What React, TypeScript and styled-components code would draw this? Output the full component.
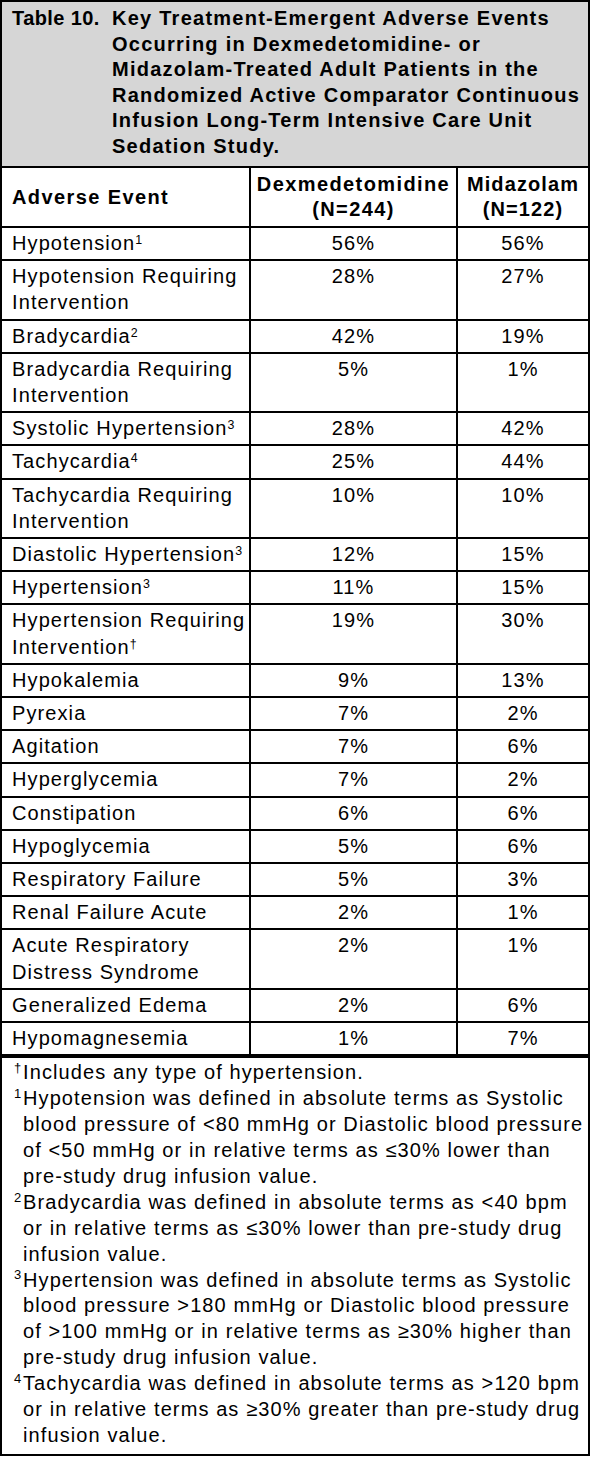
import React from 'react';
import styled, { createGlobalStyle } from 'styled-components';

const GlobalStyle = createGlobalStyle`
  html, body {
    margin: 0;
    padding: 0;
    background: #fff;
  }
  body {
    font-family: "Liberation Sans", Arial, Helvetica, sans-serif;
    color: #000;
  }
`;

type Row = { event: string; mark?: string; dex: string; mid: string };

const rows: Row[] = [
  { event: 'Hypotension', mark: '1', dex: '56%', mid: '56%' },
  { event: 'Hypotension Requiring\nIntervention', dex: '28%', mid: '27%' },
  { event: 'Bradycardia', mark: '2', dex: '42%', mid: '19%' },
  { event: 'Bradycardia Requiring\nIntervention', dex: '5%', mid: '1%' },
  { event: 'Systolic Hypertension', mark: '3', dex: '28%', mid: '42%' },
  { event: 'Tachycardia', mark: '4', dex: '25%', mid: '44%' },
  { event: 'Tachycardia Requiring\nIntervention', dex: '10%', mid: '10%' },
  { event: 'Diastolic Hypertension', mark: '3', dex: '12%', mid: '15%' },
  { event: 'Hypertension', mark: '3', dex: '11%', mid: '15%' },
  { event: 'Hypertension Requiring\nIntervention', mark: '†', dex: '19%', mid: '30%' },
  { event: 'Hypokalemia', dex: '9%', mid: '13%' },
  { event: 'Pyrexia', dex: '7%', mid: '2%' },
  { event: 'Agitation', dex: '7%', mid: '6%' },
  { event: 'Hyperglycemia', dex: '7%', mid: '2%' },
  { event: 'Constipation', dex: '6%', mid: '6%' },
  { event: 'Hypoglycemia', dex: '5%', mid: '6%' },
  { event: 'Respiratory Failure', dex: '5%', mid: '3%' },
  { event: 'Renal Failure Acute', dex: '2%', mid: '1%' },
  { event: 'Acute Respiratory\nDistress Syndrome', dex: '2%', mid: '1%' },
  { event: 'Generalized Edema', dex: '2%', mid: '6%' },
  { event: 'Hypomagnesemia', dex: '1%', mid: '7%' },
];

const notes: { mark: string; lines: string[] }[] = [
  { mark: '†', lines: ['Includes any type of hypertension.'] },
  {
    mark: '1',
    lines: [
      'Hypotension was defined in absolute terms as Systolic',
      'blood pressure of <80 mmHg or Diastolic blood pressure',
      'of <50 mmHg or in relative terms as ≤30% lower than',
      'pre-study drug infusion value.',
    ],
  },
  {
    mark: '2',
    lines: [
      'Bradycardia was defined in absolute terms as <40 bpm',
      'or in relative terms as ≤30% lower than pre-study drug',
      'infusion value.',
    ],
  },
  {
    mark: '3',
    lines: [
      'Hypertension was defined in absolute terms as Systolic',
      'blood pressure >180 mmHg or Diastolic blood pressure',
      'of >100 mmHg or in relative terms as ≥30% higher than',
      'pre-study drug infusion value.',
    ],
  },
  {
    mark: '4',
    lines: [
      'Tachycardia was defined in absolute terms as >120 bpm',
      'or in relative terms as ≥30% greater than pre-study drug',
      'infusion value.',
    ],
  },
];

const Frame = styled.div`
  width: 590px;
  box-sizing: border-box;
  border: 2px solid #000;
  letter-spacing: 1.1px;
`;

const Caption = styled.div`
  display: grid;
  grid-template-columns: 100px 1fr;
  padding: 4px 4px 7px 10px;
  background: #d6d6d6;
  border-bottom: 2px solid #000;
  font-size: 20px;
  font-weight: bold;
  line-height: 25.5px;
  letter-spacing: 1.25px;
`;

const CaptionLabel = styled.span`
  letter-spacing: 0.4px;
`;

const CaptionText = styled.div`
  white-space: pre;
`;

const Table = styled.table`
  width: 100%;
  border-collapse: collapse;
  table-layout: fixed;
  font-size: 20px;
`;

const Th = styled.th<{ $left?: boolean }>`
  padding: 4px 2px 4px ${(p) => (p.$left ? '10px' : '2px')};
  border: 2px solid #000;
  border-top: none;
  font-weight: bold;
  line-height: 25px;
  text-align: ${(p) => (p.$left ? 'left' : 'center')};
  vertical-align: middle;
  white-space: nowrap;
  letter-spacing: 1.4px;

  &:first-child {
    border-left: none;
  }
  &:last-child {
    border-right: none;
    letter-spacing: 1.1px;
  }
`;

const Td = styled.td<{ $left?: boolean }>`
  padding: 2px 2px 3px ${(p) => (p.$left ? '10px' : '2px')};
  border: 2px solid #000;
  line-height: 26.2px;
  text-align: ${(p) => (p.$left ? 'left' : 'center')};
  vertical-align: top;
  white-space: pre;

  &:first-child {
    border-left: none;
  }
  &:last-child {
    border-right: none;
  }
`;

const Sup = styled.sup`
  font-size: 0.62em;
  line-height: 0;
  vertical-align: 0.5em;
  letter-spacing: 0;
`;

const Notes = styled.div`
  padding: 2px 2px 5px 21px;
  border-top: 2px solid #000;
  font-size: 20px;
  line-height: 25.9px;
`;

const Note = styled.div`
  white-space: pre;
`;

const NoteMark = styled.span`
  display: inline-block;
  width: 9px;
  margin-left: -9px;
  font-size: 0.65em;
  line-height: 0;
  vertical-align: 0.55em;
  letter-spacing: 0;
`;

export default function App() {
  return (
    <>
      <GlobalStyle />
      <Frame>
        <Caption>
          <CaptionLabel>Table 10.</CaptionLabel>
          <CaptionText>
            {'Key Treatment-Emergent Adverse Events\nOccurring in Dexmedetomidine- or\nMidazolam-Treated Adult Patients in the\nRandomized Active Comparator Continuous\nInfusion Long-Term Intensive Care Unit\nSedation Study.'}
          </CaptionText>
        </Caption>
        <Table>
          <colgroup>
            <col style={{ width: 248 }} />
            <col style={{ width: 207 }} />
            <col />
          </colgroup>
          <thead>
            <tr>
              <Th $left>Adverse Event</Th>
              <Th>
                Dexmedetomidine
                <br />
                (N=244)
              </Th>
              <Th>
                Midazolam
                <br />
                (N=122)
              </Th>
            </tr>
          </thead>
          <tbody>
            {rows.map((r) => (
              <tr key={r.event}>
                <Td $left>
                  {r.event}
                  {r.mark && <Sup>{r.mark}</Sup>}
                </Td>
                <Td>{r.dex}</Td>
                <Td>{r.mid}</Td>
              </tr>
            ))}
          </tbody>
        </Table>
        <Notes>
          {notes.map((n) => (
            <Note key={n.mark}>
              <NoteMark>{n.mark}</NoteMark>
              {n.lines.join('\n')}
            </Note>
          ))}
        </Notes>
      </Frame>
    </>
  );
}
